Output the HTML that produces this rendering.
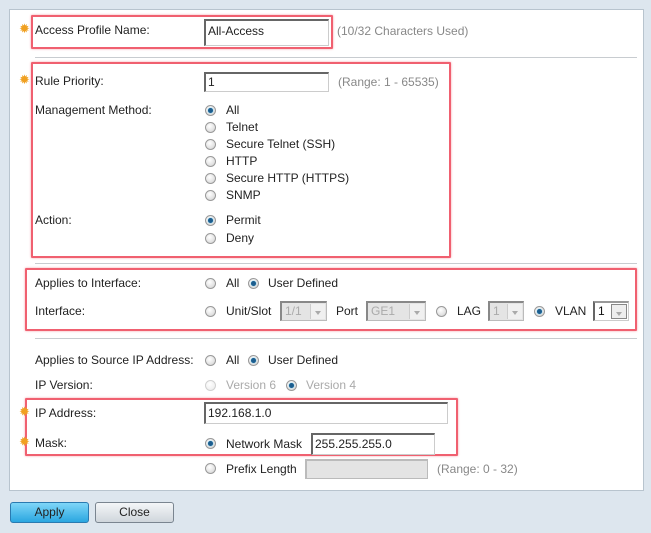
<!DOCTYPE html>
<html><head><style>
body{margin:0;width:651px;height:533px;background:#dde6ee;font-family:"Liberation Sans",Arial,sans-serif;font-size:12px;color:#222;position:relative;overflow:hidden}
.a{position:absolute;white-space:nowrap;line-height:14px}
.panel{position:absolute;left:9px;top:9px;width:633px;height:480px;background:#fff;border:1px solid #b8c4ce}
.red{position:absolute;border:2px solid #f06070;box-shadow:0 0 2px #f8a0a8;border-radius:1px}
.sep{position:absolute;height:1px;background:#c8ccd0}
.inp{position:absolute;background:#fff;border:1px solid #ccc;border-top:2px solid #666;border-left:2px solid #666;box-sizing:border-box;padding-left:2px;line-height:16px}
.dis{background:#e4e4e4;border-color:#bbb;color:#aaa}
.r{position:absolute;width:11px;height:11px;border-radius:50%;border:1px solid #999;background:radial-gradient(circle at 40% 35%,#fff,#d0d0d0);box-sizing:border-box}
.r.on::after{content:"";position:absolute;left:2px;top:2px;width:5px;height:5px;border-radius:50%;background:#1d5d8e;box-shadow:0 0 1px #0ae}
.r.g{opacity:.45}
.sel{position:absolute;box-sizing:border-box;border:1px solid #bbb;border-top:2px solid #888;border-left:2px solid #888;background:#e4e4e4;color:#aaa;padding-left:3px;line-height:16px}
.sel .arr{position:absolute;right:1px;top:1px;bottom:1px;width:14px;border-left:1px solid #ccc;background:#f0f0f0}
.sel .arr::after{content:"";position:absolute;left:4px;top:7px;border:3px solid transparent;border-top:4px solid #aaa}
.gear{position:absolute;color:#f0a020;font-size:13px;left:19px;font-family:"DejaVu Sans",sans-serif;font-weight:bold}
.g2{color:#888}
.btn{position:absolute;top:502px;height:21px;border-radius:3px;box-sizing:border-box;text-align:center;line-height:19px;font-size:12px}
</style></head><body>
<div class="panel"></div>
<div class="red" style="left:31px;top:15px;width:298px;height:30px"></div>
<div class="sep" style="left:35px;top:57px;width:602px"></div>
<div class="red" style="left:31px;top:62px;width:416px;height:192px"></div>
<div class="sep" style="left:35px;top:263px;width:602px"></div>
<div class="red" style="left:25px;top:268px;width:608px;height:59px"></div>
<div class="sep" style="left:35px;top:338px;width:602px"></div>
<div class="red" style="left:25px;top:398px;width:429px;height:54px"></div>

<span class="gear a" style="top:23px">✹</span>
<span class="a" style="left:35px;top:23px">Access Profile Name:</span>
<div class="inp" style="left:204px;top:19px;width:125px;height:27px;line-height:21px">All-Access</div>
<span class="a g2" style="left:337px;top:24px">(10/32 Characters Used)</span>

<span class="gear a" style="top:74px">✹</span>
<span class="a" style="left:35px;top:74px">Rule Priority:</span>
<div class="inp" style="left:204px;top:72px;width:125px;height:20px">1</div>
<span class="a g2" style="left:338px;top:75px">(Range: 1 - 65535)</span>

<span class="a" style="left:35px;top:103px">Management Method:</span>
<div class="r on" style="left:205px;top:105px"></div><span class="a" style="left:226px;top:103px">All</span>
<div class="r" style="left:205px;top:122px"></div><span class="a" style="left:226px;top:120px">Telnet</span>
<div class="r" style="left:205px;top:139px"></div><span class="a" style="left:226px;top:137px">Secure Telnet (SSH)</span>
<div class="r" style="left:205px;top:156px"></div><span class="a" style="left:226px;top:154px">HTTP</span>
<div class="r" style="left:205px;top:173px"></div><span class="a" style="left:226px;top:171px">Secure HTTP (HTTPS)</span>
<div class="r" style="left:205px;top:190px"></div><span class="a" style="left:226px;top:188px">SNMP</span>

<span class="a" style="left:35px;top:213px">Action:</span>
<div class="r on" style="left:205px;top:215px"></div><span class="a" style="left:226px;top:213px">Permit</span>
<div class="r" style="left:205px;top:233px"></div><span class="a" style="left:226px;top:231px">Deny</span>

<span class="a" style="left:35px;top:276px">Applies to Interface:</span>
<div class="r" style="left:205px;top:278px"></div><span class="a" style="left:226px;top:276px">All</span>
<div class="r on" style="left:248px;top:278px"></div><span class="a" style="left:268px;top:276px">User Defined</span>

<span class="a" style="left:35px;top:304px">Interface:</span>
<div class="r" style="left:205px;top:306px"></div><span class="a" style="left:226px;top:304px">Unit/Slot</span>
<div class="sel" style="left:280px;top:301px;width:47px;height:20px">1/1<div class="arr"></div></div>
<span class="a" style="left:336px;top:304px">Port</span>
<div class="sel" style="left:366px;top:301px;width:60px;height:20px">GE1<div class="arr"></div></div>
<div class="r" style="left:436px;top:306px"></div><span class="a" style="left:457px;top:304px">LAG</span>
<div class="sel" style="left:488px;top:301px;width:36px;height:20px">1<div class="arr"></div></div>
<div class="r on" style="left:534px;top:306px"></div><span class="a" style="left:555px;top:304px">VLAN</span>
<div class="sel" style="left:593px;top:301px;width:36px;height:20px;background:#fff;color:#111;border-color:#999 #ccc #ccc #666">1<div class="arr" style="background:#eee;border:1px solid #888"></div></div>

<span class="a" style="left:35px;top:353px">Applies to Source IP Address:</span>
<div class="r" style="left:205px;top:355px"></div><span class="a" style="left:226px;top:353px">All</span>
<div class="r on" style="left:248px;top:355px"></div><span class="a" style="left:268px;top:353px">User Defined</span>

<span class="a" style="left:35px;top:378px">IP Version:</span>
<div class="r g" style="left:205px;top:380px"></div><span class="a" style="left:226px;top:378px;color:#aaa">Version 6</span>
<div class="r on" style="left:286px;top:380px"></div><span class="a" style="left:306px;top:378px;color:#aaa">Version 4</span>

<span class="gear a" style="top:406px">✹</span>
<span class="a" style="left:35px;top:406px">IP Address:</span>
<div class="inp" style="left:204px;top:402px;width:244px;height:22px;line-height:18px">192.168.1.0</div>

<span class="gear a" style="top:436px">✹</span>
<span class="a" style="left:35px;top:436px">Mask:</span>
<div class="r on" style="left:205px;top:438px"></div><span class="a" style="left:226px;top:437px">Network Mask</span>
<div class="inp" style="left:311px;top:433px;width:124px;height:22px;line-height:18px">255.255.255.0</div>

<div class="r" style="left:205px;top:463px"></div><span class="a" style="left:226px;top:462px">Prefix Length</span>
<div class="inp dis" style="left:305px;top:459px;width:123px;height:20px"></div>
<span class="a g2" style="left:437px;top:462px">(Range: 0 - 32)</span>

<div class="btn" style="left:10px;width:79px;background:linear-gradient(#7fd6f8,#2aa6e0);border:1px solid #2a7ab0">Apply</div>
<div class="btn" style="left:95px;width:79px;background:linear-gradient(#f4f6f8,#cfd6dc);border:1px solid #7a8590">Close</div>
</body></html>
